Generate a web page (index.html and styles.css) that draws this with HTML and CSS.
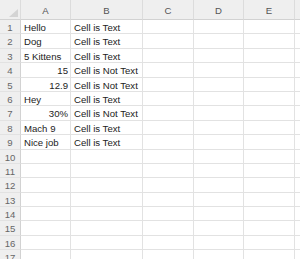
FILE: index.html
```html
<!DOCTYPE html>
<html lang="en">
<head>
    <meta charset="UTF-8">
    <title>Sheet</title>
    <link rel="stylesheet" href="styles.css">
</head>
<body>
    <div class="sheet">
        <div class="hd corner"><span class="tri"></span></div>
        <div class="hd">A</div><div class="hd">B</div><div class="hd">C</div><div class="hd">D</div><div class="hd">E</div><div class="hd"></div>

        <div class="rn">1</div><div class="c">Hello</div><div class="c">Cell is Text</div><div class="c"></div><div class="c"></div><div class="c"></div><div class="c"></div>
        <div class="rn">2</div><div class="c">Dog</div><div class="c">Cell is Text</div><div class="c"></div><div class="c"></div><div class="c"></div><div class="c"></div>
        <div class="rn">3</div><div class="c">5 Kittens</div><div class="c">Cell is Text</div><div class="c"></div><div class="c"></div><div class="c"></div><div class="c"></div>
        <div class="rn">4</div><div class="c num">15</div><div class="c">Cell is Not Text</div><div class="c"></div><div class="c"></div><div class="c"></div><div class="c"></div>
        <div class="rn">5</div><div class="c num">12.9</div><div class="c">Cell is Not Text</div><div class="c"></div><div class="c"></div><div class="c"></div><div class="c"></div>
        <div class="rn">6</div><div class="c">Hey</div><div class="c">Cell is Text</div><div class="c"></div><div class="c"></div><div class="c"></div><div class="c"></div>
        <div class="rn">7</div><div class="c num">30%</div><div class="c">Cell is Not Text</div><div class="c"></div><div class="c"></div><div class="c"></div><div class="c"></div>
        <div class="rn">8</div><div class="c">Mach 9</div><div class="c">Cell is Text</div><div class="c"></div><div class="c"></div><div class="c"></div><div class="c"></div>
        <div class="rn">9</div><div class="c">Nice job</div><div class="c">Cell is Text</div><div class="c"></div><div class="c"></div><div class="c"></div><div class="c"></div>
        <div class="rn">10</div><div class="c"></div><div class="c"></div><div class="c"></div><div class="c"></div><div class="c"></div><div class="c"></div>
        <div class="rn">11</div><div class="c"></div><div class="c"></div><div class="c"></div><div class="c"></div><div class="c"></div><div class="c"></div>
        <div class="rn">12</div><div class="c"></div><div class="c"></div><div class="c"></div><div class="c"></div><div class="c"></div><div class="c"></div>
        <div class="rn">13</div><div class="c"></div><div class="c"></div><div class="c"></div><div class="c"></div><div class="c"></div><div class="c"></div>
        <div class="rn">14</div><div class="c"></div><div class="c"></div><div class="c"></div><div class="c"></div><div class="c"></div><div class="c"></div>
        <div class="rn">15</div><div class="c"></div><div class="c"></div><div class="c"></div><div class="c"></div><div class="c"></div><div class="c"></div>
        <div class="rn">16</div><div class="c"></div><div class="c"></div><div class="c"></div><div class="c"></div><div class="c"></div><div class="c"></div>
        <div class="rn">17</div><div class="c"></div><div class="c"></div><div class="c"></div><div class="c"></div><div class="c"></div><div class="c"></div>
    </div>
</body>
</html>
```

FILE: styles.css
```css
body {
    margin: 0;
    background: #fff;
    overflow: hidden;
    font-family: "Liberation Sans", Arial, sans-serif;
    font-size: 9.6px;
    color: #222;
}

.sheet {
    display: grid;
    grid-template-columns: 21px 50px 72px 51px 50px 51px 20px;
    grid-template-rows: 20px repeat(17, 14.4px);
    width: 315px;
}

.sheet > div {
    box-sizing: border-box;
    white-space: nowrap;
    overflow: hidden;
}

.hd {
    background: #efefef;
    border-right: 1px solid #dcdcdc;
    border-bottom: 1px solid #d2d2d2;
    color: #555;
    text-align: center;
    line-height: 20px;
    padding-top: 1px;
}

.corner {
    position: relative;
}

/* select-all triangle */
.tri {
    position: absolute;
    right: 2px;
    bottom: 2px;
    width: 0;
    height: 0;
    border-left: 9px solid transparent;
    border-bottom: 8px solid #d4d4d4;
}

.rn {
    background: #efefef;
    border-right: 1px solid #d2d2d2;
    border-bottom: 1px solid #e2e2e2;
    color: #666;
    text-align: center;
    line-height: 15px;
}

.c {
    border-right: 1px solid #e2e2e2;
    border-bottom: 1px solid #e2e2e2;
    padding: 0 2px 0 3px;
    line-height: 15px;
}

.c.num {
    text-align: right;
}
```
